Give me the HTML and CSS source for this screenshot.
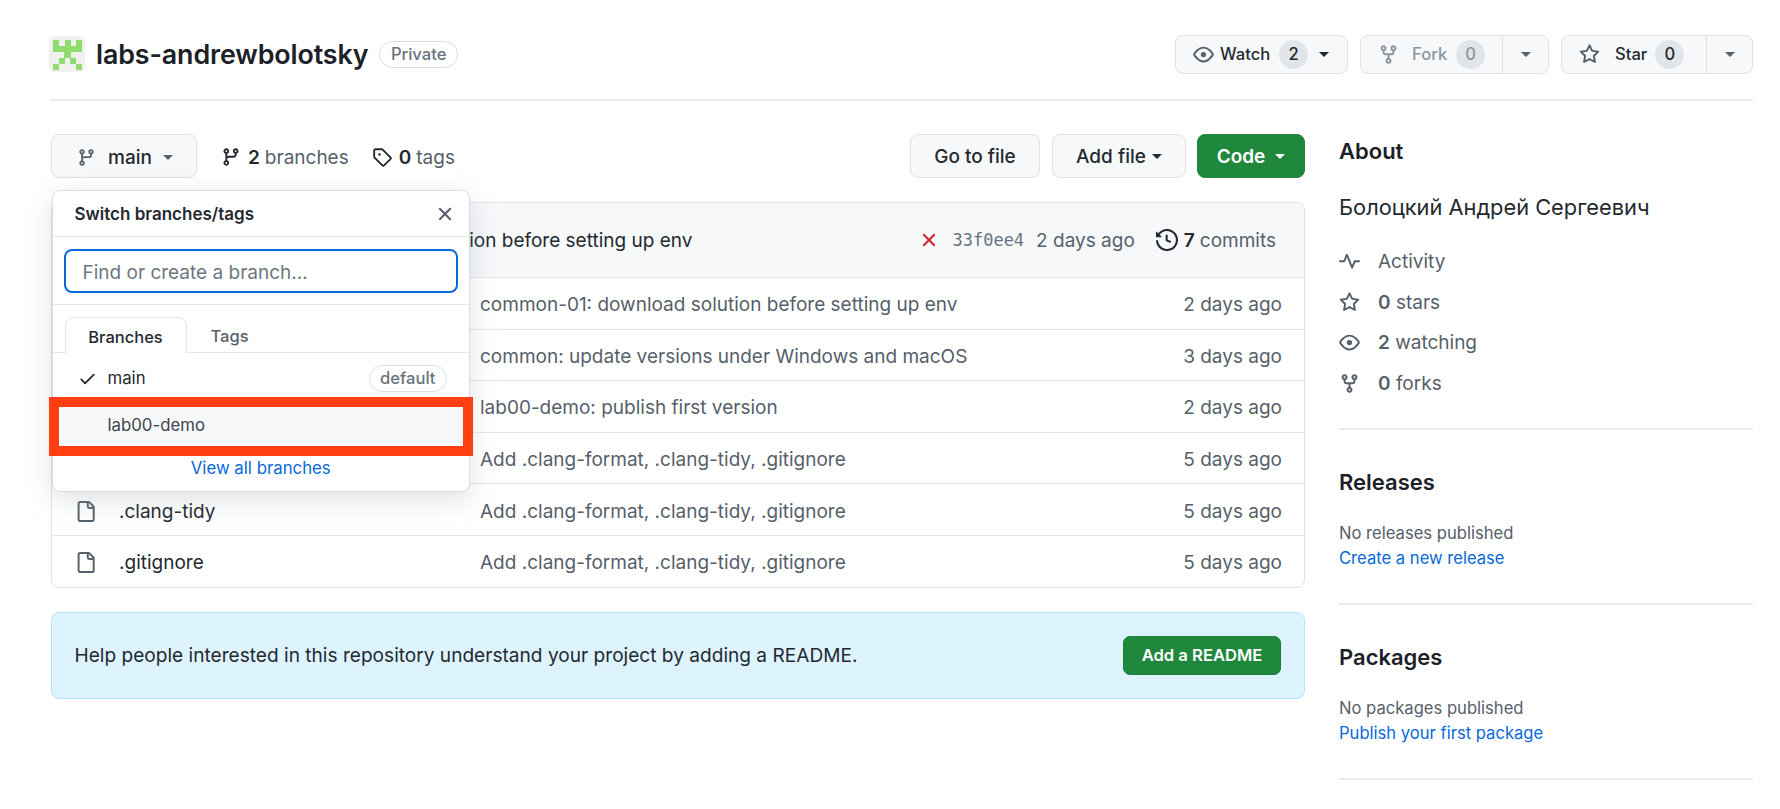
FILE: index.html
```html
<!DOCTYPE html>
<html lang="en">
<head>
<meta charset="utf-8">
<title>labs-andrewbolotsky</title>
<link rel="stylesheet" href="styles.css">
</head>
<body>
<svg class="sprite" aria-hidden="true">
  <symbol id="i-branch" viewBox="0 0 16 16"><path d="M9.5 3.25a2.25 2.25 0 1 1 3 2.122V6A2.5 2.5 0 0 1 10 8.5H6a1 1 0 0 0-1 1v1.128a2.251 2.251 0 1 1-1.5 0V5.372a2.25 2.25 0 1 1 1.5 0v1.836A2.493 2.493 0 0 1 6 7h4a1 1 0 0 0 1-1v-.628A2.25 2.25 0 0 1 9.5 3.25Zm-6 0a.75.75 0 1 0 1.5 0 .75.75 0 0 0-1.5 0Zm8.25-.75a.75.75 0 1 0 0 1.5.75.75 0 0 0 0-1.5ZM4.25 12a.75.75 0 1 0 0 1.5.75.75 0 0 0 0-1.5Z"/></symbol>
  <symbol id="i-fork" viewBox="0 0 16 16"><path d="M5 5.372v.878c0 .414.336.75.75.75h4.5a.75.75 0 0 0 .75-.75v-.878a2.25 2.25 0 1 1 1.5 0v.878a2.25 2.25 0 0 1-2.25 2.25h-1.5v2.128a2.251 2.251 0 1 1-1.5 0V8.5h-1.5A2.25 2.25 0 0 1 3.5 6.25v-.878a2.25 2.25 0 1 1 1.5 0ZM5 3.25a.75.75 0 1 0-1.5 0 .75.75 0 0 0 1.5 0Zm6.75.75a.75.75 0 1 0 0-1.5.75.75 0 0 0 0 1.5Zm-3 8.75a.75.75 0 1 0-1.5 0 .75.75 0 0 0 1.5 0Z"/></symbol>
  <symbol id="i-tag" viewBox="0 0 16 16"><path d="M1 7.775V2.75C1 1.784 1.784 1 2.75 1h5.025c.464 0 .91.184 1.238.513l6.25 6.25a1.75 1.75 0 0 1 0 2.474l-5.026 5.026a1.75 1.75 0 0 1-2.474 0l-6.25-6.25A1.752 1.752 0 0 1 1 7.775Zm1.5 0c0 .066.026.13.073.177l6.25 6.25a.25.25 0 0 0 .354 0l5.025-5.025a.25.25 0 0 0 0-.354l-6.25-6.25a.25.25 0 0 0-.177-.073H2.75a.25.25 0 0 0-.25.25ZM6 5a1 1 0 1 1 0 2 1 1 0 0 1 0-2Z"/></symbol>
  <symbol id="i-eye" viewBox="0 0 16 16"><path d="M8 2c1.981 0 3.671.992 4.933 2.078 1.27 1.091 2.187 2.345 2.637 3.023a1.62 1.62 0 0 1 0 1.798c-.45.678-1.367 1.932-2.637 3.023C11.67 13.008 9.981 14 8 14c-1.981 0-3.671-.992-4.933-2.078C1.797 10.83.88 9.576.43 8.898a1.62 1.62 0 0 1 0-1.798c.45-.677 1.367-1.931 2.637-3.022C4.33 2.992 6.019 2 8 2ZM1.679 7.932a.12.12 0 0 0 0 .136c.411.622 1.241 1.75 2.366 2.717C5.176 11.758 6.527 12.5 8 12.5c1.473 0 2.825-.742 3.955-1.715 1.124-.967 1.954-2.096 2.366-2.717a.12.12 0 0 0 0-.136c-.412-.621-1.242-1.75-2.366-2.717C10.824 4.242 9.473 3.5 8 3.5c-1.473 0-2.825.742-3.955 1.715-1.124.967-1.954 2.096-2.366 2.717ZM8 10a2 2 0 1 1-.001-3.999A2 2 0 0 1 8 10Z"/></symbol>
  <symbol id="i-star" viewBox="0 0 16 16"><path d="M8 .25a.75.75 0 0 1 .673.418l1.882 3.815 4.21.612a.75.75 0 0 1 .416 1.279l-3.046 2.97.719 4.192a.751.751 0 0 1-1.088.791L8 12.347l-3.766 1.98a.75.75 0 0 1-1.088-.79l.72-4.194L.818 6.374a.75.75 0 0 1 .416-1.28l4.21-.611L7.327.668A.75.75 0 0 1 8 .25Zm0 2.445L6.615 5.5a.75.75 0 0 1-.564.41l-3.097.45 2.24 2.184a.75.75 0 0 1 .216.664l-.528 3.084 2.769-1.456a.75.75 0 0 1 .698 0l2.77 1.456-.53-3.084a.75.75 0 0 1 .216-.664l2.24-2.183-3.096-.45a.75.75 0 0 1-.564-.41L8 2.694Z"/></symbol>
  <symbol id="i-pulse" viewBox="0 0 16 16"><path d="M6 2c.306 0 .582.187.696.471L10 10.731l1.304-3.26A.751.751 0 0 1 12 7h3.25a.75.75 0 0 1 0 1.5h-2.742l-1.812 4.528a.751.751 0 0 1-1.392 0L6 4.77 4.696 8.03A.75.75 0 0 1 4 8.5H.75a.75.75 0 0 1 0-1.5h2.742l1.812-4.529A.751.751 0 0 1 6 2Z"/></symbol>
  <symbol id="i-file" viewBox="0 0 16 16"><path d="M2 1.75C2 .784 2.784 0 3.75 0h6.586c.464 0 .909.184 1.237.513l2.914 2.914c.329.328.513.773.513 1.237v9.586A1.75 1.75 0 0 1 13.25 16h-9.5A1.75 1.75 0 0 1 2 14.25Zm1.75-.25a.25.25 0 0 0-.25.25v12.5c0 .138.112.25.25.25h9.5a.25.25 0 0 0 .25-.25V6h-2.75A1.75 1.75 0 0 1 9 4.25V1.5Zm6.75.062V4.25c0 .138.112.25.25.25h2.688l-.011-.013-2.914-2.914-.013-.011Z"/></symbol>
  <symbol id="i-x" viewBox="0 0 16 16"><path d="M3.72 3.72a.75.75 0 0 1 1.06 0L8 6.94l3.22-3.22a.749.749 0 0 1 1.275.326.749.749 0 0 1-.215.734L9.06 8l3.22 3.22a.749.749 0 0 1-.326 1.275.749.749 0 0 1-.734-.215L8 9.06l-3.22 3.22a.751.751 0 0 1-1.042-.018.751.751 0 0 1-.018-1.042L6.94 8 3.72 4.78a.75.75 0 0 1 0-1.06Z"/></symbol>
  <symbol id="i-check" viewBox="0 0 16 16"><path d="M13.78 4.22a.75.75 0 0 1 0 1.06l-7.25 7.25a.75.75 0 0 1-1.06 0L2.22 9.28a.751.751 0 0 1 .018-1.042.751.751 0 0 1 1.042-.018L6 10.94l6.72-6.72a.75.75 0 0 1 1.06 0Z"/></symbol>
  <symbol id="i-history" viewBox="0 0 16 16"><path d="m.427 1.927 1.215 1.215a8.002 8.002 0 1 1-1.6 5.685.75.75 0 1 1 1.493-.154 6.5 6.5 0 1 0 1.18-4.458l1.358 1.358A.25.25 0 0 1 3.896 6H.25A.25.25 0 0 1 0 5.75V2.104a.25.25 0 0 1 .427-.177ZM7.75 4a.75.75 0 0 1 .75.75v2.992l2.028.812a.75.75 0 0 1-.557 1.392l-2.5-1A.751.751 0 0 1 7 8.25v-3.5A.75.75 0 0 1 7.75 4Z"/></symbol>
</svg>

<div class="page">
  <header class="repo-head">
    <div class="repo-title">
      <svg class="avatar" viewBox="0 0 36 36" aria-hidden="true">
        <rect class="avatar-bg" width="36" height="36" rx="6"/>
        <path class="avatar-fg" d="M4 4h6v6H4zM16 4h6v6h-6zM27 4h6v6h-6zM4 10h29v6H4zM15 16h7v6h-7zM10 22h6v6h-6zM21 22h6v6h-6zM4 28h6v6H4zM27 28h6v6h-6z"/>
      </svg>
      <strong class="repo-name">labs-andrewbolotsky</strong>
      <span class="pill pill-private">Private</span>
    </div>
    <div class="repo-actions">
      <div class="action action-watch">
        <span class="action-main"><svg class="ic ic-action"><use href="#i-eye"/></svg><span class="action-label watch-label">Watch</span><span class="counter">2</span><i class="caret caret-dark"></i></span>
      </div>
      <div class="action action-fork">
        <span class="action-main muted-action"><svg class="ic ic-action"><use href="#i-fork"/></svg><span class="action-label">Fork</span><span class="counter">0</span></span>
        <span class="action-drop"><i class="caret"></i></span>
      </div>
      <div class="action action-star">
        <span class="action-main"><svg class="ic ic-action"><use href="#i-star"/></svg><span class="action-label star-label">Star</span><span class="counter">0</span></span>
        <span class="action-drop"><i class="caret"></i></span>
      </div>
    </div>
  </header>

  <div class="layout">
    <main class="main-col">
      <div class="toolbar">
        <button class="btn btn-branch"><svg class="ic ic-grey"><use href="#i-branch"/></svg><span>main</span><i class="caret"></i></button>
        <a class="stat stat-branches"><svg class="ic ic-dark"><use href="#i-branch"/></svg><b>2</b> <span>branches</span></a>
        <a class="stat stat-tags"><svg class="ic ic-dark"><use href="#i-tag"/></svg><b>0</b> <span>tags</span></a>
        <span class="toolbar-gap"></span>
        <button class="btn btn-goto">Go to file</button>
        <button class="btn btn-add">Add file<i class="caret caret-dark"></i></button>
        <button class="btn btn-code">Code<i class="caret caret-white"></i></button>
      </div>

      <section class="files">
        <div class="commit-bar">
          <span class="commit-msg">common-01: download solution before setting up env</span>
          <svg class="ic ic-red"><use href="#i-x"/></svg>
          <code class="hash">33f0ee4</code>
          <span class="commit-age">2 days ago</span>
          <span class="commit-count"><svg class="ic ic-history"><use href="#i-history"/></svg><b>7</b> <span>commits</span></span>
        </div>
        <div class="file-row"><span class="file-name"></span><span class="file-msg">common-01: download solution before setting up env</span><span class="file-age">2 days ago</span></div>
        <div class="file-row"><span class="file-name"></span><span class="file-msg">common: update versions under Windows and macOS</span><span class="file-age">3 days ago</span></div>
        <div class="file-row"><span class="file-name"></span><span class="file-msg">lab00-demo: publish first version</span><span class="file-age">2 days ago</span></div>
        <div class="file-row"><span class="file-name"></span><span class="file-msg">Add .clang-format, .clang-tidy, .gitignore</span><span class="file-age">5 days ago</span></div>
        <div class="file-row"><span class="file-name"><svg class="ic ic-file"><use href="#i-file"/></svg>.clang-tidy</span><span class="file-msg">Add .clang-format, .clang-tidy, .gitignore</span><span class="file-age">5 days ago</span></div>
        <div class="file-row"><span class="file-name"><svg class="ic ic-file"><use href="#i-file"/></svg>.gitignore</span><span class="file-msg">Add .clang-format, .clang-tidy, .gitignore</span><span class="file-age">5 days ago</span></div>
      </section>

      <section class="readme-note">
        <span>Help people interested in this repository understand your project by adding a README.</span>
        <button class="btn-readme">Add a README</button>
      </section>

      <div class="branch-menu">
        <div class="menu-head"><span>Switch branches/tags</span><svg class="ic ic-close"><use href="#i-x"/></svg></div>
        <div class="menu-filter"><div class="menu-input">Find or create a branch...</div></div>
        <div class="menu-tabs"><span class="tab tab-active">Branches</span><span class="tab">Tags</span></div>
        <div class="menu-item menu-item-main"><svg class="ic ic-check"><use href="#i-check"/></svg><span>main</span><span class="pill pill-default">default</span></div>
        <div class="menu-item menu-item-hover"><span>lab00-demo</span></div>
        <a class="menu-all">View all branches</a>
        <div class="highlight"></div>
      </div>
    </main>

    <aside class="side">
      <section class="side-block side-about">
        <h2>About</h2>
        <p class="about-name">Болоцкий Андрей Сергеевич</p>
        <ul class="about-list">
          <li><svg class="ic ic-side"><use href="#i-pulse"/></svg><span>Activity</span></li>
          <li><svg class="ic ic-side"><use href="#i-star"/></svg><span><b>0</b> stars</span></li>
          <li><svg class="ic ic-side"><use href="#i-eye"/></svg><span><b>2</b> watching</span></li>
          <li><svg class="ic ic-side"><use href="#i-fork"/></svg><span><b>0</b> forks</span></li>
        </ul>
      </section>
      <section class="side-block side-releases">
        <h2>Releases</h2>
        <p class="side-note">No releases published</p>
        <a class="side-link">Create a new release</a>
      </section>
      <section class="side-block side-packages">
        <h2>Packages</h2>
        <p class="side-note">No packages published</p>
        <a class="side-link">Publish your first package</a>
      </section>
    </aside>
  </div>
</div>
</body>
</html>
```
FILE: styles.css
```css
* { box-sizing: border-box; }
html, body { margin: 0; padding: 0; background: #fff; overflow: hidden; }
body { height: 809px; font-family: Inter, "Noto Sans", "Liberation Sans", sans-serif; color: #24292f; font-size: 19px; }
.sprite { display: none; }
.ic { display: block; flex: none; fill: currentColor; }
.page { width: 1703px; margin-left: 50px; }

.repo-head { display: flex; justify-content: space-between; align-items: center; height: 101px; padding-top: 35px; padding-bottom: 26px; border-bottom: 2px solid #e8ecf0; }
.repo-title { display: flex; align-items: center; margin-left: -1px; }
.avatar { width: 36px; height: 36px; }
.avatar-bg { fill: #eef1ee; }
.avatar-fg { fill: #90dc6f; }
.repo-name { margin-left: 11px; font-size: 26.8px; font-weight: 600; color: #1c2128; letter-spacing: -.1px; }
.pill { display: inline-flex; align-items: center; border: 1.5px solid #d8dee4; border-radius: 14px; color: #6a737d; font-weight: 500; }
.pill-private { margin-left: 11px; height: 27px; padding: 0 10.5px; font-size: 16.6px; }

.repo-actions { display: flex; gap: 12px; }
.action { display: flex; height: 39px; background: #f6f8fa; border: 1.5px solid #dde1e6; border-radius: 8px; font-size: 16.6px; font-weight: 500; }
.action-watch { width: 173px; }
.action-fork { width: 189px; }
.action-star { width: 192px; }
.action-main { display: flex; align-items: center; flex: 1; padding-left: 17px; }
.action-drop { display: flex; align-items: center; justify-content: center; width: 46px; border-left: 1.5px solid #dde1e6; }
.ic-action { width: 21px; height: 21px; color: #57606a; }
.action-label { margin-left: 6px; }
.action-fork .action-label { margin-left: 13px; }
.star-label { margin-left: 15px; }
.muted-action { color: #8c959f; }
.muted-action .ic-action { color: #8c959f; }
.counter { display: inline-flex; align-items: center; justify-content: center; width: 29px; height: 29px; margin-left: 9px; border-radius: 50%; background: #e1e5e9; font-size: 16.6px; }
.action-star .counter { margin-left: 8px; }
.caret { display: inline-block; width: 0; height: 0; border-style: solid; border-width: 5px 5px 0; border-color: #57606a transparent transparent; }
.caret-dark { border-top-color: #24292f; }
.caret-white { border-top-color: #fff; }
.action-watch .caret { margin-left: 11px; }

.layout { display: grid; grid-template-columns: 1255px 414px; column-gap: 34px; padding-top: 33px; }
.main-col { position: relative; padding-left: 1px; }

.toolbar { display: flex; align-items: center; height: 44px; }
.btn { display: flex; align-items: center; height: 44px; padding-top: 2px; background: #f6f8fa; border: 1.5px solid #dde1e6; border-radius: 8px; font: 500 19px Inter, "Noto Sans", sans-serif; color: #24292f; }
.btn-branch { width: 146px; padding: 2px 0 0 25px; }
.btn-branch span { margin-left: 12px; }
.btn-branch .caret { margin-left: 11px; }
.ic-grey { width: 19px; height: 19px; color: #57606a; }
.stat { display: flex; align-items: center; padding-top: 2px; color: #57606a; }
.stat b { color: #24292f; font-weight: 600; margin-right: 5px; }
.stat-branches { margin-left: 24px; }
.stat-tags { margin-left: 23px; }
.ic-dark { width: 20px; height: 20px; margin-right: 7px; color: #24292f; }
.toolbar-gap { flex: 1; }
.btn-goto { width: 130px; justify-content: center; }
.btn-add { width: 134px; margin-left: 12px; justify-content: center; }
.btn-add .caret { margin-left: 6px; }
.btn-code { width: 108px; margin-left: 11px; justify-content: center; background: #1f883d; border-color: #1f883d; color: #fff; font-weight: 600; }
.btn-code .caret { margin-left: 10px; }

.files { margin-top: 24px; border: 1.5px solid #dde2e7; border-radius: 8px; overflow: hidden; }
.commit-bar { display: flex; align-items: center; height: 74px; padding: 0 28px 0 163px; background: #f6f8fa; color: #57606a; }
.commit-msg { flex: 1; white-space: nowrap; color: #24292f; }
.ic-red { width: 22px; height: 22px; color: #d1242f; }
.hash { margin-left: 12px; font: 17px "DejaVu Sans Mono", "Liberation Mono", monospace; color: #6a737d; }
.commit-age { margin-left: 12px; }
.commit-count { display: flex; align-items: center; margin-left: 21px; }
.commit-count b { color: #24292f; font-weight: 600; margin-right: 5px; }
.ic-history { width: 22px; height: 22px; margin-right: 6px; color: #24292f; }

.file-row { display: flex; align-items: center; height: 51.6px; padding: 3px 22px 0 23px; border-top: 1.5px solid #e4e8ec; }
.file-name { display: flex; align-items: center; width: 405px; color: #24292f; }
.ic-file { width: 21px; height: 21px; margin-right: 23px; color: #57606a; }
.file-msg { flex: 1; color: #57606a; }
.file-age { color: #57606a; }

.readme-note { display: flex; align-items: center; justify-content: space-between; height: 87px; margin-top: 24px; padding: 0 23px 0 22.5px; background: #ddf4ff; border: 1.5px solid #b6e3ff; border-radius: 8px; font-size: 19.1px; }
.btn-readme { width: 158px; height: 39px; background: #1f883d; border: 1px solid #1a7f37; border-radius: 7px; color: #fff; font: 600 16.6px Inter, "Noto Sans", sans-serif; }

.branch-menu { position: absolute; left: 1.5px; top: 56px; width: 418.5px; height: 302px; background: #fff; border: 1.5px solid #d8dee4; border-radius: 8px; box-shadow: 0 8px 28px rgba(140,149,159,.28); }
.menu-head { display: flex; align-items: center; justify-content: space-between; height: 46px; padding: 0 13px 0 22px; border-bottom: 1.5px solid #e4e8ec; font-size: 17px; font-weight: 600; }
.ic-close { width: 22px; height: 22px; color: #57606a; }
.menu-filter { height: 68px; padding: 12px 11px 0; border-bottom: 1.5px solid #e4e8ec; }
.menu-input { display: flex; align-items: center; height: 44px; padding: 2px 0 0 17px; border: 2px solid #0969da; border-radius: 8px; color: #6e7781; font-size: 19px; }
.menu-tabs { display: flex; height: 48px; padding: 12px 0 0 12px; border-bottom: 1.5px solid #e4e8ec; font-size: 16.5px; font-weight: 500; }
.tab { display: flex; align-items: center; justify-content: center; width: 122px; height: 37px; padding-top: 1px; color: #57606a; }
.tab-active { margin-bottom: -1.5px; background: #fff; border: 1.5px solid #e4e8ec; border-bottom: 0; border-radius: 8px 8px 0 0; color: #24292f; }
.tab + .tab { width: 86px; }
.menu-item { display: flex; align-items: center; padding-left: 55px; font-size: 16.8px; font-weight: 400; }
.menu-item-main { height: 45px; padding: 5px 0 0 25px; }
.ic-check { width: 19px; height: 19px; margin-right: 11px; }
.pill-default { margin-left: auto; margin-right: 22px; height: 27px; padding: 0 10.5px; font-size: 16.6px; }
.menu-item-hover { height: 54px; background: #f6f8fa; color: #3d444d; }
.menu-all { display: block; margin-top: 6px; text-align: center; color: #0969da; font-size: 16.8px; font-weight: 400; line-height: 20px; }
.highlight { position: absolute; left: -4px; top: 205.5px; width: 424px; height: 59px; border: 10.5px solid #ff3e12; }

.side-block { border-bottom: 2px solid #e8ecf0; }
.side h2 { margin: 0; font-size: 22px; font-weight: 600; line-height: 26px; color: #1c2128; }
.side-about { height: 296px; padding-top: 4px; }
.about-name { margin: 30px 0 0; line-height: 26px; font-size: 21.8px; color: #24292f; }
.about-list { list-style: none; margin: 21px 0 0; padding: 0; color: #57606a; }
.about-list li { display: flex; align-items: center; height: 40.8px; }
.about-list b { font-weight: 600; }
.ic-side { width: 21px; height: 21px; margin-right: 18px; }
.side-releases { height: 175px; padding-top: 39px; }
.side-packages { height: 175px; padding-top: 39px; }
.side-note { margin: 26px 0 0; font-size: 16.6px; line-height: 25px; color: #57606a; }
.side-link { display: block; font-size: 16.6px; line-height: 25px; color: #0969da; }
```
